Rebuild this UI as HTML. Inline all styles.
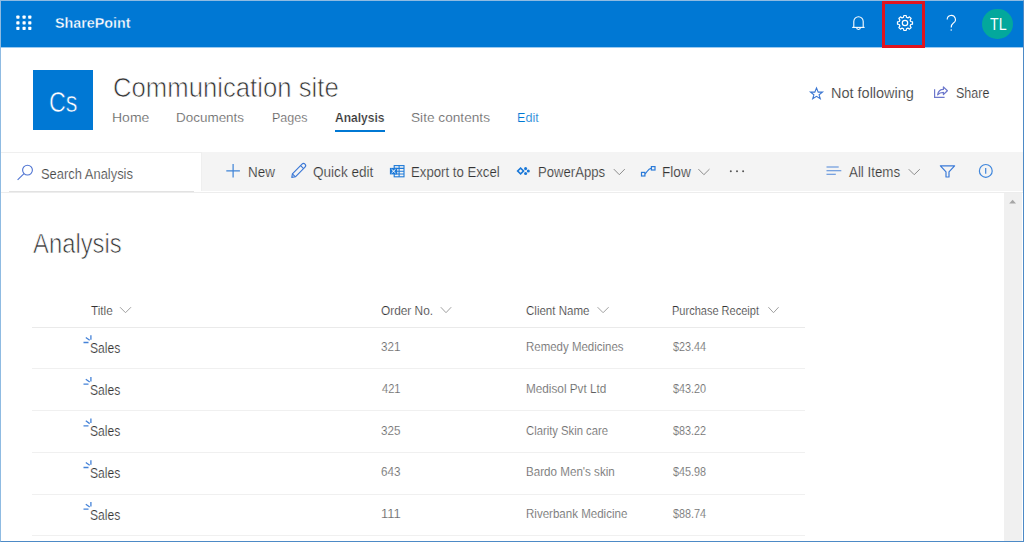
<!DOCTYPE html>
<html><head><meta charset="utf-8">
<style>
html,body{margin:0;padding:0;width:1024px;height:542px;overflow:hidden;background:#fff}
#root{position:relative;width:1024px;height:542px;overflow:hidden;background:#fff;font-family:"Liberation Sans",sans-serif}
.t{position:absolute;white-space:nowrap;transform-origin:0 0;font-family:"Liberation Sans",sans-serif}
.a{position:absolute}
svg{position:absolute;overflow:visible}
</style></head><body><div id="root">
<!-- top suite bar -->
<div class="a" style="left:0;top:0;width:1024px;height:47px;background:#0078d4"></div>
<div class="a" style="left:0;top:47px;width:1024px;height:1px;background:#9ccaf0"></div>
<!-- command bar -->
<div class="a" style="left:0;top:152px;width:1024px;height:39px;background:#f4f4f4"></div>
<div class="a" style="left:0;top:152px;width:202px;height:39px;background:#ffffff;border-top:1px solid #efefef;border-right:1px solid #efefef;box-sizing:border-box"></div>
<div class="a" style="left:9px;top:191px;width:185px;height:1px;background:#e2e2e2"></div>
<div class="a" style="left:0;top:192px;width:1024px;height:1px;background:#ededed"></div>
<!-- scrollbar -->
<div class="a" style="left:1004px;top:193px;width:18px;height:349px;background:#f0f0f0"></div>
<!-- table lines -->
<div class="a" style="left:32px;top:327px;width:773px;height:1px;background:#eaeaea"></div>
<div class="a" style="left:32px;top:368px;width:773px;height:1px;background:#f0f0f0"></div>
<div class="a" style="left:32px;top:410px;width:773px;height:1px;background:#f0f0f0"></div>
<div class="a" style="left:32px;top:452px;width:773px;height:1px;background:#f0f0f0"></div>
<div class="a" style="left:32px;top:494px;width:773px;height:1px;background:#f0f0f0"></div>
<div class="a" style="left:32px;top:535px;width:773px;height:1px;background:#f0f0f0"></div>
<!-- site logo -->
<div class="a" style="left:33px;top:70px;width:60px;height:60px;background:#0078d4"></div>
<!-- nav underline -->
<div class="a" style="left:335px;top:130px;width:50px;height:2px;background:#0078d4"></div>
<!-- avatar -->
<div class="a" style="left:982.3px;top:8.7px;width:30.8px;height:30.8px;border-radius:50%;background:#03a89c"></div>
<div class='t' style='left:55.26px;top:15.00px;font-size:15.26px;line-height:15.26px;font-weight:700;color:#ffffff;transform:scaleX(0.9375);-webkit-text-stroke:0.35px #0078d4'>SharePoint</div>
<div class='t' style='left:990.00px;top:17.00px;font-size:15.99px;line-height:15.99px;font-weight:400;color:#ffffff;transform:scaleX(0.8889);'>TL</div>
<div class='t' style='left:49.21px;top:87.00px;font-size:29.65px;line-height:29.65px;font-weight:400;color:#ffffff;transform:scaleX(0.7882);-webkit-text-stroke:0.6px #0078d4'>Cs</div>
<div class='t' style='left:113.48px;top:74.00px;font-size:27.91px;line-height:27.91px;font-weight:400;color:#333333;transform:scaleX(0.9210);-webkit-text-stroke:0.7px #fff'>Communication site</div>
<div class='t' style='left:112.33px;top:111.00px;font-size:13.08px;line-height:13.08px;font-weight:400;color:#5e5e5e;transform:scaleX(1.0697);-webkit-text-stroke:0.2px #ffffff'>Home</div>
<div class='t' style='left:176.37px;top:111.00px;font-size:13.08px;line-height:13.08px;font-weight:400;color:#5e5e5e;transform:scaleX(1.0292);-webkit-text-stroke:0.2px #ffffff'>Documents</div>
<div class='t' style='left:272.04px;top:111.00px;font-size:13.08px;line-height:13.08px;font-weight:400;color:#5e5e5e;transform:scaleX(0.9556);-webkit-text-stroke:0.2px #ffffff'>Pages</div>
<div class='t' style='left:335.30px;top:111.00px;font-size:13.08px;line-height:13.08px;font-weight:700;color:#333333;transform:scaleX(0.9208);-webkit-text-stroke:0.2px #ffffff'>Analysis</div>
<div class='t' style='left:410.96px;top:111.00px;font-size:13.08px;line-height:13.08px;font-weight:400;color:#5e5e5e;transform:scaleX(1.0446);-webkit-text-stroke:0.2px #ffffff'>Site contents</div>
<div class='t' style='left:516.84px;top:111.00px;font-size:13.08px;line-height:13.08px;font-weight:400;color:#0078d4;transform:scaleX(0.9636);-webkit-text-stroke:0.2px #ffffff'>Edit</div>
<div class='t' style='left:830.65px;top:85.00px;font-size:15.26px;line-height:15.26px;font-weight:400;color:#333333;transform:scaleX(0.9494);-webkit-text-stroke:0.2px #ffffff'>Not following</div>
<div class='t' style='left:955.78px;top:85.00px;font-size:15.26px;line-height:15.26px;font-weight:400;color:#333333;transform:scaleX(0.8205);-webkit-text-stroke:0.2px #ffffff'>Share</div>
<div class='t' style='left:40.69px;top:167.00px;font-size:14.24px;line-height:14.24px;font-weight:400;color:#444444;transform:scaleX(0.9080);-webkit-text-stroke:0.2px #ffffff'>Search Analysis</div>
<div class='t' style='left:248.03px;top:166.00px;font-size:13.95px;line-height:13.95px;font-weight:400;color:#333333;transform:scaleX(0.9667);-webkit-text-stroke:0.2px #f4f4f4'>New</div>
<div class='t' style='left:313.43px;top:166.00px;font-size:13.95px;line-height:13.95px;font-weight:400;color:#333333;transform:scaleX(0.9738);-webkit-text-stroke:0.2px #f4f4f4'>Quick edit</div>
<div class='t' style='left:411.45px;top:166.00px;font-size:13.95px;line-height:13.95px;font-weight:400;color:#333333;transform:scaleX(0.9467);-webkit-text-stroke:0.2px #f4f4f4'>Export to Excel</div>
<div class='t' style='left:537.86px;top:166.00px;font-size:13.95px;line-height:13.95px;font-weight:400;color:#333333;transform:scaleX(0.9414);-webkit-text-stroke:0.2px #f4f4f4'>PowerApps</div>
<div class='t' style='left:662.32px;top:166.00px;font-size:13.95px;line-height:13.95px;font-weight:400;color:#333333;transform:scaleX(0.9786);-webkit-text-stroke:0.2px #f4f4f4'>Flow</div>
<div class='t' style='left:849.30px;top:166.00px;font-size:13.95px;line-height:13.95px;font-weight:400;color:#333333;transform:scaleX(0.9566);-webkit-text-stroke:0.2px #f4f4f4'>All Items</div>
<div class='t' style='left:32.70px;top:229.00px;font-size:28.2px;line-height:28.2px;font-weight:400;color:#333333;transform:scaleX(0.8452);-webkit-text-stroke:0.7px #fff'>Analysis</div>
<div class='t' style='left:90.60px;top:305.00px;font-size:12.06px;line-height:12.06px;font-weight:400;color:#333333;transform:scaleX(0.9727);-webkit-text-stroke:0.2px #ffffff'>Title</div>
<div class='t' style='left:380.82px;top:305.00px;font-size:12.06px;line-height:12.06px;font-weight:400;color:#333333;transform:scaleX(0.9843);-webkit-text-stroke:0.2px #ffffff'>Order No.</div>
<div class='t' style='left:526.24px;top:305.00px;font-size:12.06px;line-height:12.06px;font-weight:400;color:#333333;transform:scaleX(0.9569);-webkit-text-stroke:0.2px #ffffff'>Client Name</div>
<div class='t' style='left:672.09px;top:305.00px;font-size:12.06px;line-height:12.06px;font-weight:400;color:#333333;transform:scaleX(0.9149);-webkit-text-stroke:0.2px #ffffff'>Purchase Receipt</div>
<div class='t' style='left:89.83px;top:342.00px;font-size:13.95px;line-height:13.95px;font-weight:400;color:#333333;transform:scaleX(0.8706);-webkit-text-stroke:0.2px #ffffff'>Sales</div>
<div class='t' style='left:380.61px;top:340.00px;font-size:13.08px;line-height:13.08px;font-weight:400;color:#5e5e5e;transform:scaleX(0.8900);-webkit-text-stroke:0.2px #ffffff'>321</div>
<div class='t' style='left:525.90px;top:341.00px;font-size:12.79px;line-height:12.79px;font-weight:400;color:#5e5e5e;transform:scaleX(0.8972);-webkit-text-stroke:0.2px #ffffff'>Remedy Medicines</div>
<div class='t' style='left:672.50px;top:341.00px;font-size:12.79px;line-height:12.79px;font-weight:400;color:#5e5e5e;transform:scaleX(0.8462);-webkit-text-stroke:0.2px #ffffff'>$23.44</div>
<div class='t' style='left:89.83px;top:384.00px;font-size:13.95px;line-height:13.95px;font-weight:400;color:#333333;transform:scaleX(0.8706);-webkit-text-stroke:0.2px #ffffff'>Sales</div>
<div class='t' style='left:381.50px;top:382.00px;font-size:13.08px;line-height:13.08px;font-weight:400;color:#5e5e5e;transform:scaleX(0.8476);-webkit-text-stroke:0.2px #ffffff'>421</div>
<div class='t' style='left:525.88px;top:383.00px;font-size:12.79px;line-height:12.79px;font-weight:400;color:#5e5e5e;transform:scaleX(0.9198);-webkit-text-stroke:0.2px #ffffff'>Medisol Pvt Ltd</div>
<div class='t' style='left:672.50px;top:383.00px;font-size:12.79px;line-height:12.79px;font-weight:400;color:#5e5e5e;transform:scaleX(0.8462);-webkit-text-stroke:0.2px #ffffff'>$43.20</div>
<div class='t' style='left:89.83px;top:425.00px;font-size:13.95px;line-height:13.95px;font-weight:400;color:#333333;transform:scaleX(0.8706);-webkit-text-stroke:0.2px #ffffff'>Sales</div>
<div class='t' style='left:380.61px;top:424.00px;font-size:13.08px;line-height:13.08px;font-weight:400;color:#5e5e5e;transform:scaleX(0.8900);-webkit-text-stroke:0.2px #ffffff'>325</div>
<div class='t' style='left:525.92px;top:425.00px;font-size:12.79px;line-height:12.79px;font-weight:400;color:#5e5e5e;transform:scaleX(0.8815);-webkit-text-stroke:0.2px #ffffff'>Clarity Skin care</div>
<div class='t' style='left:672.50px;top:425.00px;font-size:12.79px;line-height:12.79px;font-weight:400;color:#5e5e5e;transform:scaleX(0.8462);-webkit-text-stroke:0.2px #ffffff'>$83.22</div>
<div class='t' style='left:89.83px;top:467.00px;font-size:13.95px;line-height:13.95px;font-weight:400;color:#333333;transform:scaleX(0.8706);-webkit-text-stroke:0.2px #ffffff'>Sales</div>
<div class='t' style='left:380.61px;top:465.00px;font-size:13.08px;line-height:13.08px;font-weight:400;color:#5e5e5e;transform:scaleX(0.8900);-webkit-text-stroke:0.2px #ffffff'>643</div>
<div class='t' style='left:525.89px;top:466.00px;font-size:12.79px;line-height:12.79px;font-weight:400;color:#5e5e5e;transform:scaleX(0.9094);-webkit-text-stroke:0.2px #ffffff'>Bardo Men's skin</div>
<div class='t' style='left:672.50px;top:466.00px;font-size:12.79px;line-height:12.79px;font-weight:400;color:#5e5e5e;transform:scaleX(0.8462);-webkit-text-stroke:0.2px #ffffff'>$45.98</div>
<div class='t' style='left:89.83px;top:509.00px;font-size:13.95px;line-height:13.95px;font-weight:400;color:#333333;transform:scaleX(0.8706);-webkit-text-stroke:0.2px #ffffff'>Sales</div>
<div class='t' style='left:380.51px;top:507.00px;font-size:13.08px;line-height:13.08px;font-weight:400;color:#5e5e5e;transform:scaleX(0.9889);-webkit-text-stroke:0.2px #ffffff'>111</div>
<div class='t' style='left:525.90px;top:508.00px;font-size:12.79px;line-height:12.79px;font-weight:400;color:#5e5e5e;transform:scaleX(0.9027);-webkit-text-stroke:0.2px #ffffff'>Riverbank Medicine</div>
<div class='t' style='left:672.50px;top:508.00px;font-size:12.79px;line-height:12.79px;font-weight:400;color:#5e5e5e;transform:scaleX(0.8462);-webkit-text-stroke:0.2px #ffffff'>$88.74</div>
<!-- waffle -->
<svg style="left:0;top:0" width="1" height="1"><g fill="#fff">
<rect x="16.3" y="15.6" width="3.2" height="3.2" rx="0.7"/><rect x="22.5" y="15.6" width="3.2" height="3.2" rx="0.7"/><rect x="28.2" y="15.6" width="3.2" height="3.2" rx="0.7"/>
<rect x="16.3" y="21.3" width="3.2" height="3.2" rx="0.7"/><rect x="22.5" y="21.3" width="3.2" height="3.2" rx="0.7"/><rect x="28.2" y="21.3" width="3.2" height="3.2" rx="0.7"/>
<rect x="16.3" y="26.8" width="3.2" height="3.2" rx="0.7"/><rect x="22.5" y="26.8" width="3.2" height="3.2" rx="0.7"/><rect x="28.2" y="26.8" width="3.2" height="3.2" rx="0.7"/>
</g></svg>
<!-- bell -->
<svg style="left:0;top:0" width="1" height="1"><g fill="none" stroke="#fff" stroke-width="1.1">
<path d="M853.8 27.2 V21.5 A4.7 4.7 0 0 1 863.2 21.5 V27.2"/><path d="M852.2 27.4 H864.6"/><path d="M856.6 27.6 A1.9 1.9 0 0 0 860.4 27.6"/>
</g></svg>
<!-- gear -->
<svg style="left:0;top:0" width="1" height="1"><g fill="none" stroke="#fff" stroke-width="1.2" stroke-linejoin="round" ><path d="M903.49 17.30 L903.81 15.49 L906.19 15.49 L906.51 17.30 L907.96 17.90 L909.47 16.85 L911.15 18.53 L910.10 20.04 L910.70 21.49 L912.51 21.81 L912.51 24.19 L910.70 24.51 L910.10 25.96 L911.15 27.47 L909.47 29.15 L907.96 28.10 L906.51 28.70 L906.19 30.51 L903.81 30.51 L903.49 28.70 L902.04 28.10 L900.53 29.15 L898.85 27.47 L899.90 25.96 L899.30 24.51 L897.49 24.19 L897.49 21.81 L899.30 21.49 L899.90 20.04 L898.85 18.53 L900.53 16.85 L902.04 17.90 Z"/></g><circle cx="905" cy="23" r="2.7" fill="none" stroke="#fff" stroke-width="1.2"/></svg>
<!-- red box -->
<div class="a" style="left:882px;top:1px;width:43px;height:47px;border:3px solid #e0141e;box-sizing:border-box"></div>
<!-- help -->
<svg style="left:0;top:0" width="1" height="1"><g fill="none" stroke="#fff" stroke-width="1.1">
<path d="M947.2 19.6 A4.1 4.1 0 1 1 953.4 23 C951.8 24.2 951.2 25.1 951.2 27.5"/></g><circle cx="951.2" cy="30.1" r="0.75" fill="#fff"/></svg>
<!-- star -->
<svg style="left:0;top:0" width="1" height="1"><path fill="none" stroke="#3a76d2" stroke-width="1.1" stroke-linejoin="miter" d="M816.5 88 L818.2 92.1 L822.5 92.1 L819.1 94.8 L820.3 98.8 L816.5 96.4 L812.7 98.8 L813.9 94.8 L810.5 92.1 L814.8 92.1 Z"/></svg>
<!-- share -->
<svg style="left:0;top:0" width="1" height="1"><g fill="none" stroke="#6d78cc" stroke-width="1.2">
<path d="M934.6 89.3 V97.3 H944.6"/><path stroke-linejoin="round" d="M937.6 94.8 C938.2 91.4 940.4 89.4 943.4 89.4 V86.9 L947.4 90.7 L943.4 94.5 V92.3 C941 92.3 939.2 92.9 937.6 94.8 Z"/>
</g></svg>
<!-- search -->
<svg style="left:0;top:0" width="1" height="1"><g fill="none" stroke="#4f74d2" stroke-width="1.1">
<circle cx="27.5" cy="170.1" r="4.9"/><path d="M24 173.7 L17.6 179.9"/></g></svg>
<!-- plus -->
<svg style="left:0;top:0" width="1" height="1"><g fill="none" stroke="#3d82d6" stroke-width="1.2">
<path d="M226.3 170.8 H239.9 M233.1 164.1 V177.4"/></g></svg>
<!-- pencil -->
<svg style="left:0;top:0" width="1" height="1"><g fill="none" stroke="#3b78d6" stroke-width="1.15" stroke-linejoin="round">
<path d="M291.8 177.4 L292.4 173.8 L302 164.2 A2.12 2.12 0 0 1 305 167.2 L295.4 176.8 Z"/><path d="M292.4 173.8 L295.4 176.8 M300.6 165.6 L303.6 168.6"/></g></svg>
<!-- excel -->
<svg style="left:0;top:0" width="1" height="1">
<g fill="none" stroke="#1e7ad8" stroke-width="1.1"><rect x="394.2" y="165.6" width="9.8" height="11.2"/><path d="M399.1 165.6 V176.8 M394.2 168.4 H404 M394.2 171.2 H404 M394.2 174 H404"/></g>
<rect x="389.9" y="167.9" width="7.3" height="6.5" fill="#1e7ad8"/>
<path d="M391.6 169.3 L395.5 173 M395.5 169.3 L391.6 173" stroke="#fff" stroke-width="1"/>
</svg>
<!-- powerapps -->
<svg style="left:0;top:0" width="1" height="1"><g fill="#1a78d8">
<path d="M520.6 166.9 L524.7 171 L520.6 175.1 L516.5 171 Z M520.6 169.2 L518.8 171 L520.6 172.8 L522.4 171 Z" fill-rule="evenodd"/>
<circle cx="525.6" cy="168.6" r="1.55"/><circle cx="525.6" cy="173.5" r="1.55"/><circle cx="528.3" cy="171" r="1.55"/></g></svg>
<!-- chevrons -->
<svg style="left:0;top:0" width="1" height="1"><g fill="none" stroke="#8c8c8c" stroke-width="1">
<path d="M613.8 169.1 L619.3 174.7 L624.8 169.1"/>
<path d="M698.4 169.1 L703.9 174.7 L709.5 169.1"/>
<path d="M908.7 169.2 L914.2 174.7 L919.8 169.2"/>
</g><g fill="none" stroke="#a0a0a0" stroke-width="1">
<path d="M120 307.2 L125.5 312.7 L131 307.2"/>
<path d="M440.8 307.2 L446 312.7 L451.2 307.2"/>
<path d="M597.6 307.2 L603.1 312.7 L608.6 307.2"/>
<path d="M768.4 307.2 L773.5 312.7 L778.6 307.2"/>
</g></svg>
<!-- flow -->
<svg style="left:0;top:0" width="1" height="1"><g fill="none" stroke="#2a7ad8" stroke-width="1.2">
<rect x="641.5" y="172.4" width="3.4" height="3.6"/><rect x="651.4" y="166.6" width="3.6" height="3.4"/>
<path d="M644.9 174 C647 173 648 167.8 651.4 168.3"/></g></svg>
<!-- more dots -->
<svg style="left:0;top:0" width="1" height="1"><g fill="#555">
<circle cx="730.8" cy="171.2" r="1"/><circle cx="737" cy="171.2" r="1"/><circle cx="743.1" cy="171.2" r="1"/></g></svg>
<!-- lines -->
<svg style="left:0;top:0" width="1" height="1"><g fill="none" stroke="#4f86d8" stroke-width="1.1">
<path d="M826.5 167 H838.7 M826.5 170.8 H841.3 M826.5 174.3 H835.8"/></g></svg>
<!-- filter -->
<svg style="left:0;top:0" width="1" height="1"><g fill="none" stroke="#3a7ad8" stroke-width="1.2" stroke-linejoin="round">
<path d="M940.4 165.8 H954.6 L949 171.8 V177 H946 V171.8 Z"/></g></svg>
<!-- info -->
<svg style="left:0;top:0" width="1" height="1"><g fill="none" stroke="#3f86dc" stroke-width="1.2">
<circle cx="985.8" cy="170.9" r="6.4"/><path d="M985.7 168 V173.8"/></g></svg>
<!-- scroll arrow -->
<svg style="left:0;top:0" width="1" height="1"><path d="M1009.2 203.6 L1012.6 199.8 L1016 203.6 Z" fill="#a6a6a6"/></svg>
<!-- sparkles -->
<svg style="left:0;top:0" width="1" height="1"><g fill="none" stroke="#4482d8" stroke-width="1.3" id="sparks">
<path d="M83.5 342.5 H88.5 M85.8 337.5 L89.7 340.3 M90.9 335.3 V339.7"/>
<path d="M83.5 384.2 H88.5 M85.8 379.2 L89.7 382.0 M90.9 377.0 V381.4"/>
<path d="M83.5 425.8 H88.5 M85.8 420.8 L89.7 423.6 M90.9 418.6 V423.0"/>
<path d="M83.5 467.5 H88.5 M85.8 462.5 L89.7 465.3 M90.9 460.3 V464.7"/>
<path d="M83.5 509.2 H88.5 M85.8 504.2 L89.7 507.0 M90.9 502.0 V506.4"/>
</g></svg>
<!-- outer border -->
<div class="a" style="left:0;top:0;width:1024px;height:542px;box-sizing:border-box;border-top:1px solid #8fbbe2;border-left:1px solid #8fbbe2;border-right:1px solid #4d8ac6;border-bottom:1px solid #4d8ac6"></div>

</div></body></html>
